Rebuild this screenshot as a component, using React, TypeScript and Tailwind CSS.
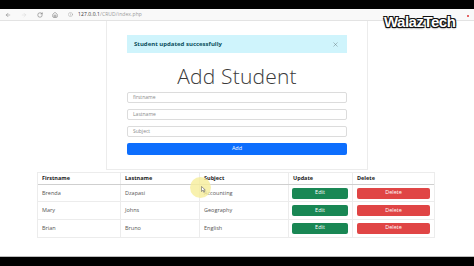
import { ArrowLeft, ArrowRight, RotateCw, Home, Info, X } from "lucide-react";

const students = [
  { first: "Brenda", last: "Dzapasi", subject: "Accounting" },
  { first: "Mary", last: "Johns", subject: "Geography" },
  { first: "Brian", last: "Bruno", subject: "English" },
];

const BrowserBar = () => (
  <div className="h-[12px] flex items-center bg-[#f9f9f9] border-b border-[#e3e3e3] pl-[5px] text-[#555]">
    <ArrowLeft size={6} strokeWidth={1.6} />
    <ArrowRight size={6} strokeWidth={1.6} className="ml-[10px] text-[#cfcfcf]" />
    <RotateCw size={6} strokeWidth={1.8} className="ml-[10px]" />
    <Home size={6} strokeWidth={1.8} className="ml-[9px]" />
    <Info size={5} strokeWidth={1.6} className="ml-[10px] text-[#888]" />
    <span className="ml-[5px] text-[5px] leading-none tracking-[0.1px]">
      <span className="text-[#333]">127.0.0.1</span>
      <span className="text-[#999]">/CRUD/index.php</span>
    </span>
  </div>
);

const StudentForm = () => (
  <div className="ml-[106px] w-[262px] h-[149px] border-x border-b border-[#ececec] px-[20px] pt-[14px]">
    <div className="h-[18px] bg-[#cff4fc] flex items-center justify-between pl-[7px] pr-[8px]">
      <span className="text-[6px] font-bold text-[#0b4f5c]">Student updated successfully</span>
      <X size={7} strokeWidth={1.4} className="text-[#5a6a70]" />
    </div>
    <h1 className="mt-[11px] text-center text-[21px] leading-[24px] font-light tracking-[0.2px] text-[#3a3a3a]">Add Student</h1>
    <div className="mt-[4px] flex flex-col gap-[6px]">
      {["firstname", "Lastname", "Subject"].map((p) => (
        <div
          key={p}
          className="h-[11px] border border-[#dcdcdc] rounded-[2px] flex items-center pl-[5px] text-[5px] text-[#8a8a8a]"
        >
          {p}
        </div>
      ))}
    </div>
    <button className="mt-[6px] w-full h-[12px] rounded-[2px] bg-[#0d6efd] text-white text-[5.5px] leading-none flex items-center justify-center">
      Add
    </button>
  </div>
);

const StudentTable = () => (
  <div className="relative ml-[37px] mt-[2px] w-[398px] border border-[#ececec] text-[5.5px]">
    <div className="grid grid-cols-[83px_79px_89px_64px_1fr] h-[12px] border-b border-[#cfcfcf] font-bold text-[#222]">
      {["Firstname", "Lastname", "Subject", "Update", "Delete"].map((h, i) => (
        <div key={h} className={`flex items-center pl-[4px] ${i < 4 ? "border-r border-[#ececec]" : ""}`}>
          {h}
        </div>
      ))}
    </div>
    {students.map((s, i) => (
      <div
        key={s.first}
        className={`grid grid-cols-[83px_79px_89px_64px_1fr] h-[17.3px] text-[#555] ${i < 2 ? "border-b border-[#ececec]" : ""}`}
      >
        <div className="flex items-center pl-[4px] border-r border-[#ececec]">{s.first}</div>
        <div className="flex items-center pl-[4px] border-r border-[#ececec]">{s.last}</div>
        <div className="flex items-center pl-[4px] border-r border-[#ececec]">{s.subject}</div>
        <div className="flex items-center pl-[3px] pr-[4px] border-r border-[#ececec]">
          <button className="w-full h-[11px] rounded-[2px] bg-[#198754] text-white text-[5.5px] leading-none flex items-center justify-center">
            Edit
          </button>
        </div>
        <div className="flex items-center px-[4px]">
          <button className="w-full h-[11px] rounded-[2px] bg-[#e04545] text-white text-[5.5px] leading-none flex items-center justify-center">
            Delete
          </button>
        </div>
      </div>
    ))}
    {/* cursor highlight */}
    <div className="absolute left-[152px] top-[4px] w-[21px] h-[21px] rounded-full bg-[#f6ee9a]/80" />
    <svg className="absolute left-[163px] top-[13px]" width="5" height="7" viewBox="0 0 5 7">
      <path d="M0.5 0.5 L0.5 5.5 L1.8 4.3 L2.8 6.4 L3.6 6 L2.6 4 L4.3 4 Z" fill="#fff" stroke="#444" strokeWidth="0.5" />
    </svg>
  </div>
);

export default function App() {
  return (
    <div className="relative w-[474px] h-[266px] overflow-hidden bg-white flex flex-col font-['Open_Sans',sans-serif]">
      <div className="h-[9px] bg-black" />
      <BrowserBar />
      <div className="flex-1 flex flex-col">
        <StudentForm />
        <StudentTable />
      </div>
      <div className="h-[10px] bg-black border-t border-[#bdbdbd]" />
      {/* watermark */}
      <div className="absolute left-[384px] top-[11px] text-[15px] font-bold tracking-[-0.5px] text-white [text-shadow:_-1px_-1px_0_#111,_1px_-1px_0_#111,_-1px_1px_0_#111,_1px_1px_0_#111,_0_1px_2px_#000] font-['Liberation_Sans',sans-serif]">
        WalazTech
      </div>
      <div className="absolute left-[467px] top-[15px] w-[2px] h-[2px] rounded-full bg-[#d33]" />
    </div>
  );
}
